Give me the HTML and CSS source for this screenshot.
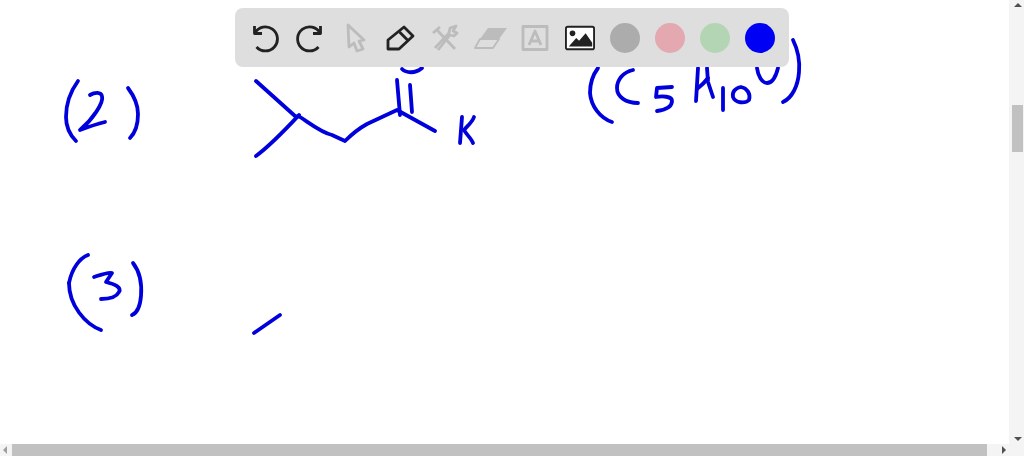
FILE: index.html
```html
<!DOCTYPE html>
<html lang="en">
<head>
<meta charset="utf-8">
<title>Whiteboard</title>
<link rel="stylesheet" href="styles.css">
</head>
<body>
<div class="viewport">
  <main class="board">
    <svg class="ink" width="1009" height="444" viewBox="0 0 1009 444" fill="none">
      <g class="strokes">
        <path d="M78 81C70 92 66 104 66 117C66 128 70 135 76 141"/>
        <path d="M90 95C95 92 101 92 102 96C104 103 92 120 80 130C88 127 97 124 105 122"/>
        <path d="M128 88C134 96 138 104 138 114C138 124 135 133 130 138"/>
        <path d="M256 81L295 116L300 117C312 125 322 133 332 135L345 141C352 134 358 129 367 124L397 110L435 131"/>
        <path d="M256 156C272 144 285 130 299 115"/>
        <path d="M397 80L400 115"/>
        <path d="M410 85L412 112"/>
        <path d="M402 69C406 73 415 74 422 68"/>
        <path d="M462 117L460 143"/>
        <path d="M474 117C472 123 466 127 464 130C466 134 471 138 473 143"/>
        <path d="M598 68C592 76 590 84 590 93C591 106 600 118 612 122"/>
        <path d="M633 70C623 72 617 80 617 88C617 97 626 103 638 103"/>
        <path d="M672 87L657 88L656 97C662 96 672 96 672 101C672 107 664 110 657 111"/>
        <path d="M698 68L696 101"/>
        <path d="M697 89C701 86 705 82 708 78"/>
        <path d="M707 68L708 82L713 97"/>
        <path d="M723 88L723 110"/>
        <path d="M741 87C735 88 732 92 733 97C735 103 745 104 749 100C751 94 747 88 741 87Z"/>
        <path d="M757 68C758 76 762 83 767 83C773 83 776 76 778 68"/>
        <path d="M793 40C798 50 800 60 799 72C798 86 792 98 783 102"/>
        <path d="M69 283C72 268 80 258 88 255"/>
        <path d="M69 283C69 305 85 324 101 330"/>
        <path d="M94 277C100 275 108 272 112 273L106 282C114 284 122 287 119 292C116 298 108 299 101 299"/>
        <path d="M133 263C140 272 142 284 141 296C140 308 137 313 132 315"/>
        <path d="M254 333L280 315"/>
      </g>
    </svg>
    <div class="toolbar">
      <span class="tool">
        <svg viewBox="0 0 30 30" width="30" height="30" fill="none" class="icon-dark">
          <path d="M5 10A12 12 0 1 1 6.500 24"/><path d="M4.500 3V10.500H12"/>
        </svg>
      </span>
      <span class="tool">
        <svg viewBox="0 0 30 30" width="30" height="30" fill="none" class="icon-dark">
          <path d="M25 10A12 12 0 1 0 23.500 24"/><path d="M25.500 3V10.500H18"/>
        </svg>
      </span>
      <span class="tool">
        <svg viewBox="0 0 30 30" width="30" height="30" fill="none" class="icon-muted">
          <path d="M8 2L24 17L19 18L23 26L17 28L14 20L9 24Z"/>
        </svg>
      </span>
      <span class="tool">
        <svg viewBox="0 0 30 30" width="30" height="30" fill="none" class="icon-dark">
          <path d="M19 4L28 13L14 26H3V17Z"/><path d="M14.500 9L23 17.500"/>
        </svg>
      </span>
      <span class="tool">
        <svg viewBox="0 0 30 30" width="30" height="30" fill="none" class="icon-muted">
          <path d="M7 7L25 26M10 4L3 10"/>
          <path d="M5 25L19 10L20 5L26 3L23 8L27 10L24 13L20 12L8 27"/>
        </svg>
      </span>
      <span class="tool">
        <svg viewBox="0 0 30 30" width="30" height="30" class="icon-muted eraser">
          <path class="eraser-top" d="M13 5H32L24 16H5Z"/>
          <path class="eraser-base" d="M5 16H24L18 25H0Z"/>
        </svg>
      </span>
      <span class="tool">
        <svg viewBox="0 0 30 30" width="30" height="30" fill="none" class="icon-muted">
          <rect x="3" y="3.500" width="24" height="23"/><path d="M9 22L15 8L21 22M11 18H19"/>
        </svg>
      </span>
      <span class="tool">
        <svg viewBox="0 0 32 28" width="32" height="28" class="icon-image">
          <rect class="frame" x="1" y="2" width="30" height="24" rx="2"/>
          <circle class="fill" cx="8" cy="9" r="3"/>
          <path class="fill" d="M4 23L12 14L15 17L22 9L29 19V23Z"/>
        </svg>
      </span>
      <span class="swatch swatch-grey"></span>
      <span class="swatch swatch-pink"></span>
      <span class="swatch swatch-green"></span>
      <span class="swatch swatch-blue"></span>
    </div>
  </main>
  <div class="vbar">
    <span class="arrow arrow-up"></span>
    <div class="vtrack"><div class="vthumb"></div></div>
    <span class="arrow arrow-down"></span>
  </div>
  <div class="hbar">
    <span class="arrow arrow-left"></span>
    <div class="htrack"><div class="hthumb"></div></div>
    <span class="arrow arrow-right"></span>
  </div>
  <div class="corner"></div>
</div>
</body>
</html>
```
FILE: styles.css
```css
* { box-sizing: border-box; }
html, body { margin: 0; height: 100%; overflow: hidden; background: #fff; }
.viewport {
  width: 1024px;
  height: 456px;
  display: grid;
  grid-template-columns: 1009px 15px;
  grid-template-rows: 444px 12px;
}
.board { position: relative; overflow: hidden; background: #fff; }
.ink { display: block; }
.strokes { stroke: #0000dc; stroke-width: 3.800; stroke-linecap: round; stroke-linejoin: round; }
.toolbar {
  position: absolute;
  left: 235px;
  top: 8px;
  width: 554px;
  height: 59px;
  padding: 0 14.500px;
  display: flex;
  align-items: center;
  gap: 15px;
  background: #dedede;
  border-radius: 8px;
}
.tool { width: 30px; height: 30px; display: flex; align-items: center; justify-content: center; flex: none; }
.icon-dark { stroke: #222; stroke-width: 2.800; stroke-linejoin: round; }
.icon-muted { stroke: #bcbcbc; stroke-width: 2.800; stroke-linejoin: round; }
.eraser { overflow: visible; }
.eraser-top { fill: #bcbcbc; stroke: none; }
.eraser-base { fill: none; stroke-width: 1.800; }
.icon-image .frame { fill: #fff; stroke: #222; stroke-width: 2; }
.icon-image .fill { fill: #222; }
.swatch { width: 30px; height: 30px; border-radius: 50%; flex: none; }
.swatch-grey { background: #acacac; }
.swatch-pink { background: #e3a8b0; }
.swatch-green { background: #b4d5b4; }
.swatch-blue { background: #0000f5; }
.vbar { display: flex; flex-direction: column; align-items: center; background: #f4f4f4; padding-left: 3px; }
.vtrack { flex: 1; width: 100%; padding-top: 93px; }
.vthumb { width: 11px; height: 47px; background: #c1c1c1; }
.hbar { display: flex; align-items: center; background: #f4f4f4; }
.htrack { flex: 1; height: 100%; padding-right: 2px; }
.hthumb { height: 100%; width: 975px; background: #c1c1c1; }
.corner { background: #f4f4f4; }
.arrow { flex: none; width: 12px; height: 12px; display: block; position: relative; }
.arrow::after { content: ""; position: absolute; left: 2px; top: 2px; border: 4px solid transparent; }
.arrow-up::after { top: -1px; border-bottom-color: #505050; }
.arrow-down::after { top: 5px; border-top-color: #505050; }
.arrow-left::after { left: -1px; border-right-color: #a0a0a0; }
.arrow-right::after { left: 5px; border-left-color: #505050; }
```
